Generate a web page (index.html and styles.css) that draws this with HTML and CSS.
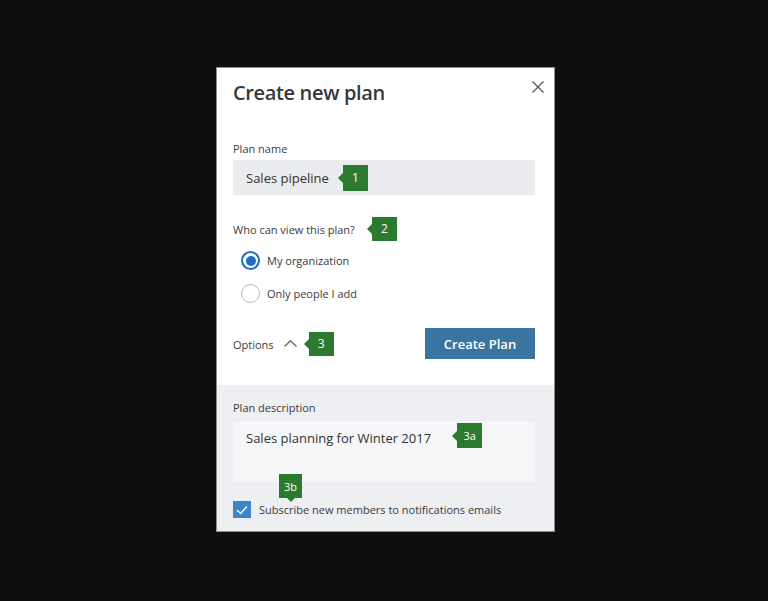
FILE: index.html
```html
<!DOCTYPE html>
<html lang="en">
<head>
<meta charset="utf-8">
<title>Create new plan</title>
<link rel="stylesheet" href="styles.css">
</head>
<body>
<div class="dialog">
  <div class="main">
    <div class="head">
      <h1 class="title">Create new plan</h1>
      <button class="close" aria-label="Close">
        <svg width="12" height="12" viewBox="0 0 12 12"><path d="M0.5 0.5 L11.5 11.5 M11.5 0.5 L0.5 11.5" stroke="#555" stroke-width="1.3" fill="none"/></svg>
      </button>
    </div>
    <div class="lbl lbl-name">Plan name</div>
    <div class="field">
      <span>Sales pipeline</span>
      <span class="badge badge-left b1">1</span>
    </div>
    <div class="question">
      <span>Who can view this plan?</span>
      <span class="badge badge-left b2">2</span>
    </div>
    <div class="radio-row">
      <span class="radio checked"></span>
      <span>My organization</span>
    </div>
    <div class="radio-row">
      <span class="radio"></span>
      <span>Only people I add</span>
    </div>
    <div class="foot">
      <div class="opts">
        <span>Options</span>
        <svg class="chev" width="13" height="7" viewBox="0 0 13 7"><polyline points="0.5,6.5 6.5,0.8 12.5,6.5" stroke="#666" stroke-width="1.3" fill="none"/></svg>
        <span class="badge badge-left b3">3</span>
      </div>
      <button class="primary">Create Plan</button>
    </div>
  </div>
  <div class="more">
    <div class="lbl">Plan description</div>
    <div class="area">
      <span>Sales planning for Winter 2017</span>
      <span class="badge badge-left b3a">3a</span>
    </div>
    <div class="check-row">
      <span class="checkbox">
        <svg width="12" height="10" viewBox="0 0 12 10"><polyline points="1,5 4.5,8.5 11,1.5" stroke="#fff" stroke-width="1.4" fill="none"/></svg>
      </span>
      <span>Subscribe new members to notifications emails</span>
      <span class="badge badge-down b3b">3b</span>
    </div>
  </div>
</div>
</body>
</html>
```

FILE: styles.css
```css
* { box-sizing: border-box; }

html, body {
  margin: 0;
  padding: 0;
  background: #0e0e0e;
}

body {
  font-family: "Open Sans", "Liberation Sans", sans-serif;
  color: #3a3a3a;
  font-size: 11px;
  padding: 67px 0 0 216px;
  height: 601px;
}

.dialog {
  width: 339px;
  background: #fff;
  border: 1px solid #8c8c8c;
}

.main {
  padding: 11px 19px 26px 16px;
}

.head {
  display: flex;
  justify-content: space-between;
  align-items: flex-start;
  height: 28px;
}

.title {
  margin: 0;
  font-size: 20px;
  line-height: 28px;
  font-weight: 600;
  letter-spacing: -0.35px;
  color: #373737;
}

.close {
  border: 0;
  background: none;
  padding: 0;
  margin: 2px -9px 0 0;
  width: 12px;
  height: 12px;
  display: block;
}
.close svg { display: block; }

.lbl {
  font-size: 11px;
  line-height: 16px;
  color: #3a3a3a;
}
.lbl-name { margin-top: 34px; }

.field {
  margin-top: 3px;
  height: 35px;
  background: #ebecef;
  display: flex;
  align-items: center;
  padding-left: 13px;
  font-size: 13px;
  color: #333;
}

.badge {
  position: relative;
  display: inline-flex;
  align-items: center;
  justify-content: center;
  background: #2c7a2f;
  color: #fff;
  font-size: 12px;
  line-height: 1;
  width: 25px;
  height: 25px;
}
.badge-left::before {
  content: "";
  position: absolute;
  left: -5px;
  top: 50%;
  margin-top: -5px;
  border-top: 5px solid transparent;
  border-bottom: 5px solid transparent;
  border-right: 5px solid #2c7a2f;
}
.badge-down::after {
  content: "";
  position: absolute;
  bottom: -4px;
  left: 50%;
  margin-left: -4px;
  border-left: 4px solid transparent;
  border-right: 4px solid transparent;
  border-top: 4px solid #2c7a2f;
}

.b1 { margin-left: 14px; height: 26px; }

.question {
  margin-top: 22px;
  height: 24px;
  display: flex;
  align-items: center;
}
.b2 { margin-left: 17px; height: 24px; }

.radio-row {
  height: 33px;
  display: flex;
  align-items: center;
  gap: 7px;
  padding-left: 8px;
}
.question + .radio-row { margin-top: 3px; }

.radio {
  width: 19px;
  height: 19px;
  border-radius: 50%;
  border: 1px solid #b7b7b7;
  background: #fff;
  position: relative;
  flex: none;
}
.radio.checked {
  border: 2px solid #1c6fc4;
}
.radio.checked::after {
  content: "";
  position: absolute;
  left: 2.5px;
  top: 2.5px;
  width: 10px;
  height: 10px;
  border-radius: 50%;
  background: #1c6fc4;
}

.foot {
  margin-top: 18px;
  height: 31px;
  display: flex;
  justify-content: space-between;
  align-items: center;
}
.opts {
  display: flex;
  align-items: center;
  padding-top: 1px;
}
.chev { margin-left: 10px; margin-top: -2px; display: block; }
.b3 { margin-left: 12px; height: 24px; margin-top: -1px; }

.primary {
  width: 110px;
  height: 31px;
  border: 0;
  border-radius: 0;
  background: #3a75a0;
  color: #fff;
  font-family: "Open Sans", "Liberation Sans", sans-serif;
  font-weight: 600;
  font-size: 13px;
  padding: 0;
}

.more {
  background: #edeff2;
  padding: 15px 19px 12px 16px;
}

.area {
  margin-top: 5px;
  height: 61px;
  background: #f5f6f8;
  padding: 7px 13px;
  display: flex;
  align-items: flex-start;
  font-size: 13px;
  line-height: 20px;
  color: #333;
}
.b3a { margin-left: 26px; margin-top: -5px; font-size: 11px; }

.check-row {
  position: relative;
  margin-top: 18px;
  height: 19px;
  display: flex;
  align-items: center;
  gap: 8px;
  font-size: 11px;
}
.checkbox {
  width: 18px;
  height: 17px;
  background: #3b86c6;
  display: flex;
  align-items: center;
  justify-content: center;
  flex: none;
}
.checkbox svg { display: block; }

.b3b {
  position: absolute;
  left: 46px;
  top: -26px;
  width: 23px;
  height: 24px;
  font-size: 11px;
}
```
